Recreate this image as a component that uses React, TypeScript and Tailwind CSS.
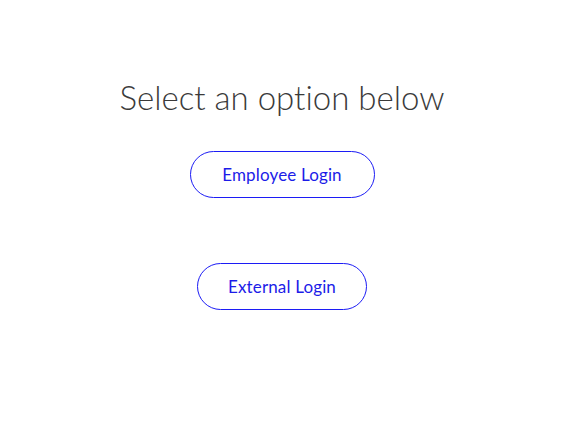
export default function App() {
  return (
    <div className="min-h-screen bg-white flex flex-col items-center pt-[76px] pr-[16px] font-['Lato','Noto_Sans',sans-serif] [font-variant-ligatures:none]">
      <h1 className="text-[33px] leading-[42px] font-light text-[#3a3a3a]">
        Select an option below
      </h1>
      <button className="mt-[33px] h-[47px] w-[185px] rounded-full border border-[#1c1cf5] text-[17px] font-normal tracking-[0.15px] text-[#1c1ce8] bg-white">
        Employee Login
      </button>
      <button className="mt-[65px] h-[47px] w-[170px] rounded-full border border-[#1c1cf5] text-[17px] font-normal tracking-[0.15px] text-[#1c1ce8] bg-white">
        External Login
      </button>
    </div>
  );
}
